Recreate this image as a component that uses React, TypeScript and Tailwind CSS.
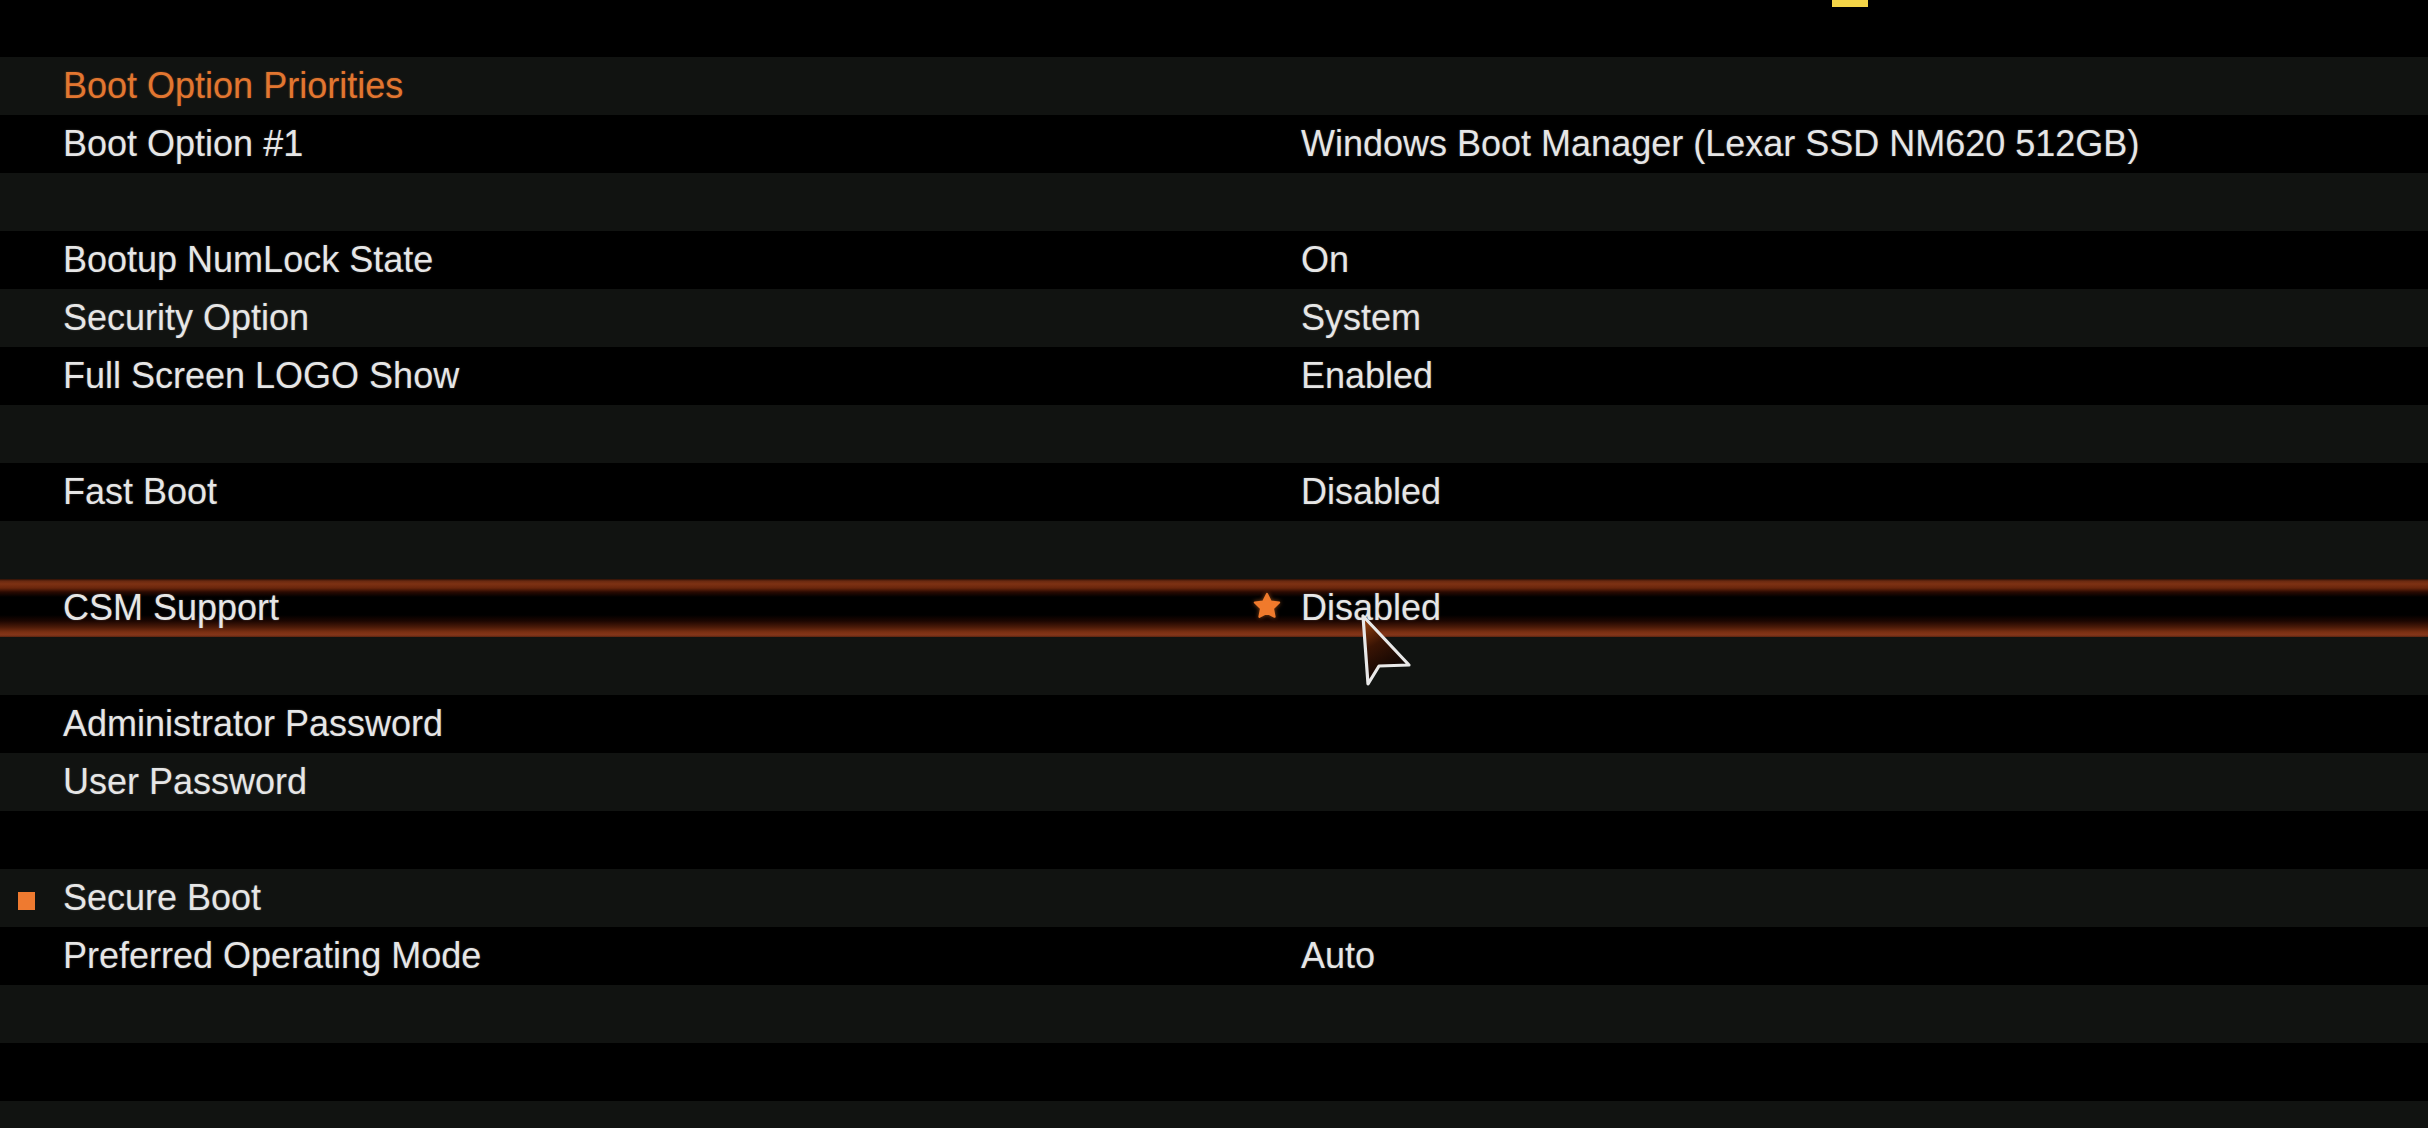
import React from "react";

type Row = {
  label?: string;
  value?: string;
  title?: boolean;
  star?: boolean;
  square?: boolean;
  highlight?: boolean;
};

const rows: Row[] = [
  { label: "Boot Option Priorities", title: true },
  { label: "Boot Option #1", value: "Windows Boot Manager (Lexar SSD NM620 512GB)" },
  {},
  { label: "Bootup NumLock State", value: "On" },
  { label: "Security Option", value: "System" },
  { label: "Full Screen LOGO Show", value: "Enabled" },
  {},
  { label: "Fast Boot", value: "Disabled" },
  {},
  { label: "CSM Support", value: "Disabled", star: true, highlight: true },
  {},
  { label: "Administrator Password" },
  { label: "User Password" },
  {},
  { label: "Secure Boot", square: true },
  { label: "Preferred Operating Mode", value: "Auto" },
  {},
  {},
  {},
];

function Star() {
  return (
    <svg width="28" height="27" viewBox="0 0 24 23" className="ml-[-2px] mt-[-6px] drop-shadow-[0_0_2px_rgba(240,120,40,0.6)]">
      <path
        d="M12 1.5l3.2 6.6 7.2.9-5.3 5 1.4 7.2L12 17.7l-6.5 3.5 1.4-7.2-5.3-5 7.2-.9z"
        fill="#f07a2c"
        stroke="#f07a2c"
        strokeWidth="1.8"
        strokeLinejoin="round"
      />
    </svg>
  );
}

function Cursor() {
  return (
    <svg width="56" height="78" viewBox="-4 -4 56 78" className="absolute left-[58px] top-[22px]">
      <defs>
        <linearGradient id="cg" x1="0" y1="0" x2="0.4" y2="1">
          <stop offset="0" stopColor="#a4470f" />
          <stop offset="0.45" stopColor="#3a1404" />
          <stop offset="1" stopColor="#050202" />
        </linearGradient>
      </defs>
      <path d="M0 0 L5 68 L16 50 L46 49 Z" fill="url(#cg)" stroke="#e8e8e8" strokeWidth="3.2" strokeLinejoin="round" />
    </svg>
  );
}

export default function App() {
  return (
    <div
      className="w-[2428px] h-[1128px] overflow-hidden bg-black text-[#e6e6e6]"
      style={{ fontFamily: '"Liberation Sans", Arial, sans-serif' }}
    >
      <div className="h-[57px] bg-black">
        <div className="ml-[1832px] w-[36px] h-[7px] bg-[#f4d548]" />
      </div>
      {rows.map((r, i) => {
        const gray = i % 2 === 0;
        const bg = r.highlight
          ? "bg-[linear-gradient(to_bottom,#2a1006_0px,#6a2910_2px,#7d3113_5px,#6a260c_9px,#2a0a02_13px,#000_18px,#000_36px,#1c0601_42px,#4a1a08_48px,#7a2f12_53px,#84361a_56px,#5a2410_58px)]"
          : gray
          ? "bg-[#111311]"
          : "bg-black";
        return (
          <div
            key={i}
            className={`grid grid-cols-[1255px_46px_1fr] h-[58px] items-center text-[36px] leading-none [text-shadow:0_0_2px_rgba(255,255,255,0.25)] ${bg}`}
          >
            <div className="flex items-center pl-[18px]">
              <div className="w-[45px] flex items-center">
                {r.square && <div className="w-[17px] h-[18px] mt-[6px] bg-[#ee7a30]" />}
              </div>
              {r.label && (
                <span className={r.title ? "text-[#e27630] [text-shadow:0_0_2px_rgba(226,118,48,0.4)]" : ""}>
                  {r.label}
                </span>
              )}
            </div>
            <div className="flex items-center">{r.star && <Star />}</div>
            <div className="relative">
              {r.value && <span>{r.value}</span>}
              {r.highlight && <Cursor />}
            </div>
          </div>
        );
      })}
    </div>
  );
}
